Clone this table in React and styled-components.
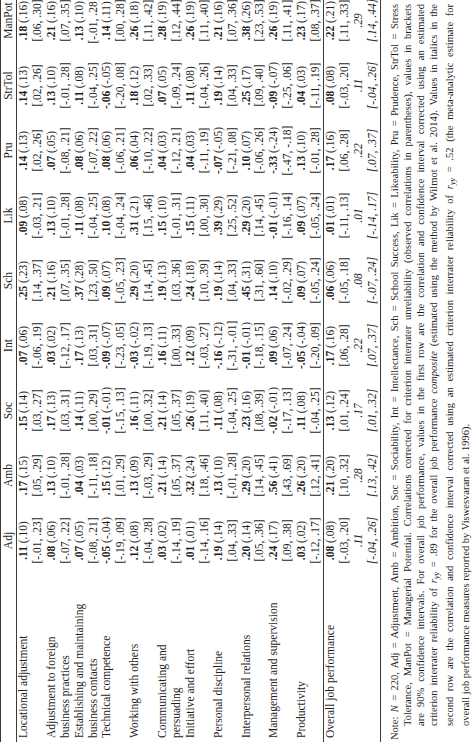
import React from "react";
import styled, { createGlobalStyle, css } from "styled-components";

const GlobalStyle = createGlobalStyle`
  html, body {
    margin: 0;
    padding: 0;
    background: #fff;
  }
`;

// the page is a table printed sideways: lay it out upright, then turn it
const Page = styled.div`
  width: 474px;
  height: 742px;
  overflow: hidden;
  background: #fff;
`;

const Sheet = styled.div`
  width: 742px;
  height: 474px;
  overflow: hidden;
  transform-origin: 0 0;
  transform: translateY(742px) rotate(-90deg);
  background: #fff;
  color: #1e1e1e;
  font-family: "Liberation Serif", "Times New Roman", serif;
`;

const Table = styled.div`
  width: 760px;
  border-top: 1px solid #3a3a3a;
  border-bottom: 1px solid #3a3a3a;
`;

const Row = styled.div`
  display: grid;
  grid-template-columns: 169px repeat(9, 65px);
  ${(p) =>
    p.$head &&
    css`
      height: 15px;
      border-bottom: 1px solid #3a3a3a;
    `}
  ${(p) =>
    p.$ruled &&
    css`
      border-top: 1px solid #3a3a3a;
    `}
`;

const HeadCell = styled.div`
  font-size: 11.5px;
  line-height: 15px;
  text-align: center;
`;

const Label = styled.div`
  padding-left: 4px;
  font-size: 11.5px;
  line-height: 13.9px;
  white-space: nowrap;
`;

const Cell = styled.div`
  font-size: 11.5px;
  line-height: 13.9px;
  text-align: center;
  white-space: nowrap;
`;

const Line = styled.div`
  font-style: ${(p) => (p.$italic ? "italic" : "normal")};
`;

const Note = styled.div`
  width: 736px;
  margin-top: 7px;
  padding-left: 2px;
  font-size: 10.5px;
  line-height: 13px;
`;

const NoteLine = styled.div`
  text-align: justify;
  text-align-last: ${(p) => (p.$last ? "left" : "justify")};
  padding-left: ${(p) => (p.$indent ? "14px" : "0")};
`;

const Sub = styled.sub`
  font-size: 8px;
  vertical-align: -2px;
  font-style: italic;
`;

const cols = ["Adj", "Amb", "Soc", "Int", "Sch", "Lik", "Pru", "StrTol", "ManPot"];

const rows = [
  {
    label: ["Locational adjustment"],
    cells: [
      ".11 (.10) [-.01, .23]", ".17 (.15) [.05, .29]", ".15 (.14) [.03, .27]",
      ".07 (.06) [-.06, .19]", ".25 (.23) [.14, .37]", ".09 (.08) [-.03, .21]",
      ".14 (.13) [.02, .26]", ".14 (.13) [.02, .26]", ".18 (.16) [.06, .30]",
    ],
  },
  {
    label: ["Adjustment to foreign", "business practices"],
    cells: [
      ".08 (.06) [-.07, .22]", ".13 (.10) [-.01, .28]", ".17 (.13) [.03, .31]",
      ".03 (.02) [-.12, .17]", ".21 (.16) [.07, .35]", ".13 (.10) [-.01, .28]",
      ".07 (.05) [-.08, .21]", ".13 (.10) [-.01, .28]", ".21 (.16) [.07, .35]",
    ],
  },
  {
    label: ["Establishing and maintaining", "business contacts"],
    cells: [
      ".07 (.05) [-.08, .21]", ".04 (.03) [-.11, .18]", ".14 (.11) [.00, .29]",
      ".17 (.13) [.03, .31]", ".37 (.28) [.23, .50]", ".11 (.08) [-.04, .25]",
      ".08 (.06) [-.07, .22]", ".11 (.08) [-.04, .25]", ".13 (.10) [-.01, .28]",
    ],
  },
  {
    label: ["Technical competence"],
    cells: [
      "-.05 (-.04) [-.19, .09]", ".15 (.12) [.01, .29]", "-.01 (-.01) [-.15, .13]",
      "-.09 (-.07) [-.23, .05]", ".09 (.07) [-.05, .23]", ".10 (.08) [-.04, .24]",
      ".08 (.06) [-.06, .21]", "-.06 (-.05) [-.20, .08]", ".14 (.11) [.00, .28]",
    ],
  },
  {
    label: ["Working with others"],
    cells: [
      ".12 (.08) [-.04, .28]", ".13 (.09) [-.03, .29]", ".16 (.11) [.00, .32]",
      "-.03 (-.02) [-.19, .13]", ".29 (.20) [.14, .45]", ".31 (.21) [.15, .46]",
      ".06 (.04) [-.10, .22]", ".18 (.12) [.02, .33]", ".26 (.18) [.11, .42]",
    ],
  },
  {
    label: ["Communicating and", "persuading"],
    cells: [
      ".03 (.02) [-.14, .19]", ".21 (.14) [.05, .37]", ".21 (.14) [.05, .37]",
      ".16 (.11) [.00, .33]", ".19 (.13) [.03, .36]", ".15 (.10) [-.01, .31]",
      ".04 (.03) [-.12, .21]", ".07 (.05) [-.09, .24]", ".28 (.19) [.12, .44]",
    ],
  },
  {
    label: ["Initiative and effort"],
    cells: [
      ".01 (.01) [-.14, .16]", ".32 (.24) [.18, .46]", ".26 (.19) [.11, .40]",
      ".12 (.09) [-.03, .27]", ".24 (.18) [.10, .39]", ".15 (.11) [.00, .30]",
      ".04 (.03) [-.11, .19]", ".11 (.08) [-.04, .26]", ".26 (.19) [.11, .40]",
    ],
  },
  {
    label: ["Personal discipline"],
    cells: [
      ".19 (.14) [.04, .33]", ".13 (.10) [-.01, .28]", ".11 (.08) [-.04, .25]",
      "-.16 (-.12) [-.31, -.01]", ".19 (.14) [.04, .33]", ".39 (.29) [.25, .52]",
      "-.07 (-.05) [-.21, .08]", ".19 (.14) [.04, .33]", ".21 (.16) [.07, .36]",
    ],
  },
  {
    label: ["Interpersonal relations"],
    cells: [
      ".20 (.14) [.05, .36]", ".29 (.20) [.14, .45]", ".23 (.16) [.08, .39]",
      "-.01 (-.01) [-.18, .15]", ".45 (.31) [.31, .60]", ".29 (.20) [.14, .45]",
      ".10 (.07) [-.06, .26]", ".25 (.17) [.09, .40]", ".38 (.26) [.23, .53]",
    ],
  },
  {
    label: ["Management and supervision"],
    cells: [
      ".24 (.17) [.09, .38]", ".56 (.41) [.43, .69]", "-.02 (-.01) [-.17, .13]",
      ".09 (.06) [-.07, .24]", ".14 (.10) [-.02, .29]", "-.01 (-.01) [-.16, .14]",
      "-.33 (-.24) [-.47, -.18]", "-.09 (-.07) [-.25, .06]", ".26 (.19) [.11, .41]",
    ],
  },
  {
    label: ["Productivity"],
    cells: [
      ".03 (.02) [-.12, .17]", ".26 (.20) [.12, .41]", ".11 (.08) [-.04, .25]",
      "-.05 (-.04) [-.20, .09]", ".09 (.07) [-.05, .24]", ".09 (.07) [-.05, .24]",
      ".13 (.10) [-.01, .28]", ".04 (.03) [-.11, .19]", ".23 (.17) [.08, .37]",
    ],
  },
];

const overall = [
  ".08 (.08) [-.03, .20] .11 [-.04, .26]",
  ".21 (.20) [.10, .32] .28 [.13, .42]",
  ".13 (.12) [.01, .24] .17 [.01, .32]",
  ".17 (.16) [.06, .28] .22 [.07, .37]",
  ".06 (.06) [-.05, .18] .08 [-.07, .24]",
  ".01 (.01) [-.11, .13] .01 [-.14, .17]",
  ".17 (.16) [.06, .28] .22 [.07, .37]",
  ".08 (.08) [-.03, .20] .11 [-.04, .26]",
  ".22 (.21) [.11, .33] .29 [.14, .44]",
];

const Value = ({ text, extra }) => {
  const p = text.split(" ");
  return (
    <Cell>
      <Line>
        <b>{p[0]}</b> {p[1]}
      </Line>
      <Line>{p[2] + " " + p[3]}</Line>
      {extra && (
        <>
          <Line $italic>{p[4]}</Line>
          <Line $italic>{p[5] + " " + p[6]}</Line>
        </>
      )}
    </Cell>
  );
};

const Ryy = () => (
  <>
    <i>r</i>
    <Sub>yy</Sub>
  </>
);

export default function App() {
  return (
    <Page>
      <GlobalStyle />
      <Sheet>
        <Table>
          <Row $head>
            <HeadCell />
            {cols.map((c) => (
              <HeadCell key={c}>{c}</HeadCell>
            ))}
          </Row>
          {rows.map((r) => (
            <Row key={r.label[0]}>
              <Label>
                {r.label.map((l) => (
                  <div key={l}>{l}</div>
                ))}
              </Label>
              {r.cells.map((c, i) => (
                <Value key={i} text={c} />
              ))}
            </Row>
          ))}
          <Row $ruled>
            <Label>Overall job performance</Label>
            {overall.map((c, i) => (
              <Value key={i} text={c} extra />
            ))}
          </Row>
        </Table>
        <Note>
          <NoteLine>
            Note: <i>N</i> = 220, Adj = Adjustment, Amb = Ambition, Soc = Sociability, Int =
            Intellectance, Sch = School Success, Lik = Likeability, Pru = Prudence, StrTol = Stress
          </NoteLine>
          <NoteLine $indent>
            Tolerance, ManPot = Managerial Potential. Correlations corrected for criterion
            interrater unreliability (observed correlations in parentheses), values in brackets
          </NoteLine>
          <NoteLine $indent>
            are 90% confidence intervals. For overall job performance, values in the first row are
            the correlation and confidence interval corrected using an estimated
          </NoteLine>
          <NoteLine $indent>
            criterion interrater reliability of <Ryy /> = .89 for the overall job performance{" "}
            <i>composite</i> (estimated using the method by Wilmot et al. 2014). Values in italics
            in the
          </NoteLine>
          <NoteLine $indent>
            second row are the correlation and confidence interval corrected using an estimated
            criterion interrater reliability of <Ryy /> = .52 (the meta-analytic estimate for
          </NoteLine>
          <NoteLine $indent $last>
            overall job performance measures reported by Viswesvaran et al. 1996).
          </NoteLine>
        </Note>
      </Sheet>
    </Page>
  );
}
